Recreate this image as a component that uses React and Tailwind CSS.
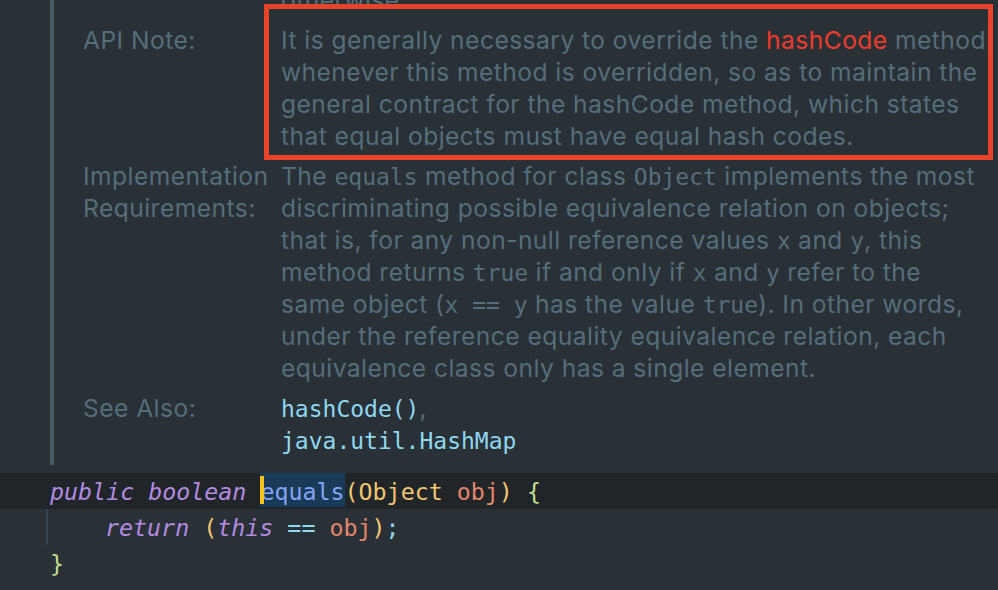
import React from "react";

const monoCls = "font-['DejaVu_Sans_Mono',monospace]";

function M({ children }) {
  return <span className={`${monoCls} text-[23px] tracking-normal`}>{children}</span>;
}

function Line({ children }) {
  return <div className="h-[32px] leading-[32px] whitespace-nowrap">{children}</div>;
}

function Section({ label, children, className = "" }) {
  return (
    <div className={`flex ${className}`}>
      <div className="w-[198px] shrink-0">{label}</div>
      <div className="flex-1">{children}</div>
    </div>
  );
}

export default function App() {
  return (
    <div className="relative w-[998px] h-[590px] overflow-hidden bg-[#293036] text-[#566e7a] text-[24.6px] tracking-[0.45px] font-['Inter',sans-serif]">
      {/* doc block */}
      <div className="ml-[50px] -mt-[16px] border-l-4 border-[#4a585f] pl-[29px] pb-[9px]">
        <Section label={<Line>&nbsp;</Line>}>
          <Line>otherwise.</Line>
        </Section>
        <Section className="mt-2" label={<Line>API Note:</Line>}>
          <Line>
            It is generally necessary to override the{" "}
            <span className="text-[#ee3b2b]">hashCode</span> method
          </Line>
          <Line>whenever this method is overridden, so as to maintain the</Line>
          <Line>general contract for the hashCode method, which states</Line>
          <Line>that equal objects must have equal hash codes.</Line>
        </Section>
        <Section
          className="mt-2"
          label={
            <>
              <Line>Implementation</Line>
              <Line>Requirements:</Line>
            </>
          }
        >
          <Line>
            The <M>equals</M> method for class <M>Object</M> implements the most
          </Line>
          <Line>discriminating possible equivalence relation on objects;</Line>
          <Line>
            that is, for any non-null reference values <M>x</M> and <M>y</M>, this
          </Line>
          <Line>
            method returns <M>true</M> if and only if <M>x</M> and <M>y</M> refer to the
          </Line>
          <Line>
            same object (<M>x == y</M> has the value <M>true</M>). In other words,
          </Line>
          <Line>under the reference equality equivalence relation, each</Line>
          <Line>equivalence class only has a single element.</Line>
        </Section>
        <Section className="mt-2" label={<Line>See Also:</Line>}>
          <Line>
            <span className={`${monoCls} text-[23px] tracking-normal text-[#8fd8f2]`}>hashCode()</span>,
          </Line>
          <Line>
            <span className={`${monoCls} text-[23px] tracking-normal text-[#8fd8f2]`}>java.util.HashMap</span>
          </Line>
        </Section>
      </div>

      {/* code */}
      <div className={`mt-[8px] ${monoCls} text-[23.3px] tracking-normal`}>
        <div className="h-[36px] leading-[38px] bg-[#1f2529] pl-[50px] whitespace-pre">
          <span className="italic text-[#b48ae0]">public boolean </span>
          <span className="relative bg-[#1a3b58] text-[#82a5f5] inline-block h-[34px] leading-[38px]">
            <span className="absolute left-0 top-[3px] w-[4px] h-[28px] bg-[#f5c21b]"></span>
            equals
          </span>
          <span className="text-[#f5c66f]">(Object </span>
          <span className="text-[#e5856a]">obj</span>
          <span className="text-[#f5c66f]">)</span>
          <span> </span>
          <span className="text-[#c0df8e]">{"{"}</span>
        </div>
        <div className="h-[36px] leading-[38px] pl-[46px] flex">
          <div className="w-[2px] h-[36px] bg-[#37444b]"></div>
          <div className="pl-[57px] whitespace-pre">
            <span className="italic text-[#b48ae0]">return </span>
            <span className="text-[#f5c66f]">(</span>
            <span className="italic text-[#b48ae0]">this</span>
            <span className="text-[#8fd8f2]"> == </span>
            <span className="text-[#e5856a]">obj</span>
            <span className="text-[#f5c66f]">)</span>
            <span className="text-[#8fd8f2]">;</span>
          </div>
        </div>
        <div className="h-[36px] leading-[38px] pl-[50px] text-[#c0df8e]">{"}"}</div>
      </div>

      {/* annotation box */}
      <div className="absolute left-[264px] top-[4px] w-[729px] h-[156px] border-[5px] border-[#e8432b] pointer-events-none"></div>
    </div>
  );
}
